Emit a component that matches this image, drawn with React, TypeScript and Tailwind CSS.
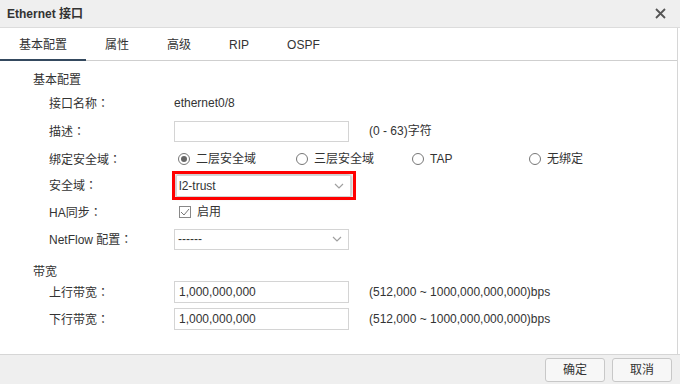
import { useState } from "react";

const font = { fontFamily: '"Liberation Sans", Arial, "Noto Sans CJK SC", sans-serif' };

function Chevron() {
  return (
    <svg width="10" height="6" viewBox="0 0 10 6" className="absolute right-[6px] top-1/2 -translate-y-1/2">
      <path d="M1 1 L5 5 L9 1" fill="none" stroke="#a0a0a0" strokeWidth="1.2" />
    </svg>
  );
}

function Radio({ checked, label }: { checked?: boolean; label: string }) {
  return (
    <label className="flex items-center gap-[6px]">
      <span className="w-[12px] h-[12px] rounded-full border border-[#777] flex items-center justify-center bg-white">
        {checked && <span className="w-[6px] h-[6px] rounded-full bg-[#666]" />}
      </span>
      <span>{label}</span>
    </label>
  );
}

function Row({ label, h, children }: { label: string; h: string; children?: React.ReactNode }) {
  return (
    <div className={`flex items-center ${h}`}>
      <div className="w-[174px] pl-[49px] shrink-0 whitespace-nowrap">
        {label}
        <span style={{ fontFamily: '"Noto Sans CJK TC", sans-serif' }}>：</span>
      </div>
      <div className="flex-1 flex items-center">{children}</div>
    </div>
  );
}

export default function App() {
  const [tab] = useState(0);
  const tabs = ["基本配置", "属性", "高级", "RIP", "OSPF"];

  return (
    <div className="w-[680px] h-[384px] flex flex-col bg-white text-[12px] text-[#333] overflow-hidden" style={font}>
      {/* header */}
      <div className="h-[28px] shrink-0 flex items-center justify-between bg-[#efefef] border-b border-[#dcdcdc] pl-[7px] pr-[14px]">
        <span className="text-[12px] font-bold text-[#333]">Ethernet 接口</span>
        <svg width="11" height="11" viewBox="0 0 11 11">
          <path d="M1 1 L10 10 M10 1 L1 10" stroke="#555" strokeWidth="1.8" />
        </svg>
      </div>

      <div className="flex-1 flex flex-col w-[678px] border-r border-[#d6d6d6]">
        {/* tabs */}
        <div className="h-[33px] shrink-0 flex border-b border-[#cfcfcf]">
          {tabs.map((t, i) => (
            <div
              key={t}
              className={
                "px-[19px] flex items-center pt-[2px] " +
                (i === tab ? "border-b-2 border-[#34495e] mb-[-1px]" : "")
              }
            >
              {t}
            </div>
          ))}
        </div>

        {/* content */}
        <div className="flex-1 pt-[10px]">
          <div className="pl-[33px] h-[18px] flex items-center">基本配置</div>
          <Row label="接口名称" h="h-[28px]">ethernet0/8</Row>
          <Row label="描述" h="h-[28px]">
            <input className="w-[175px] h-[21px] border border-[#d4d4d4] outline-none" />
            <span className="ml-[20px]">(0 - 63)字符</span>
          </Row>
          <Row label="绑定安全域" h="h-[28px]">
            <div className="flex items-center">
              <div className="w-[122px] pl-[4px]"><Radio checked label="二层安全域" /></div>
              <div className="w-[116px]"><Radio label="三层安全域" /></div>
              <div className="w-[117px]"><Radio label="TAP" /></div>
              <div><Radio label="无绑定" /></div>
            </div>
          </Row>
          <Row label="安全域" h="h-[25px]">
            <div className="relative ml-[2px]">
              <div className="relative w-[175px] h-[22px] bg-white border border-[#d4d4d4] shadow-[0_0_4px_rgba(0,0,0,0.45)] flex items-center pl-[2px]">
                l2-trust
                <Chevron />
              </div>
              <div className="absolute left-[-4px] right-[-5px] top-[-4px] bottom-[-3px] border-[3px] border-[#f00]" />
            </div>
          </Row>
          <Row label="HA同步" h="h-[28px]">
            <label className="flex items-center gap-[6px] ml-[5px]">
              <span className="w-[12px] h-[12px] border border-[#888] flex items-center justify-center bg-white">
                <svg width="10" height="8" viewBox="0 0 10 8">
                  <path d="M1 4 L4 7 L9 1" fill="none" stroke="#777" strokeWidth="1" />
                </svg>
              </span>
              启用
            </label>
          </Row>
          <Row label="NetFlow 配置" h="h-[26px]">
            <div className="relative w-[175px] h-[21px] border border-[#d4d4d4] flex items-center pl-[3px]">
              ------
              <Chevron />
            </div>
          </Row>

          <div className="pl-[33px] h-[18px] flex items-center mt-[11px]">带宽</div>
          <div className="flex flex-col gap-[5px]">
            <Row label="上行带宽" h="h-[22px]">
              <div className="w-[175px] h-[22px] border border-[#d4d4d4] flex items-center pl-[4px]">1,000,000,000</div>
              <span className="ml-[20px]">(512,000 ~ 1000,000,000,000)bps</span>
            </Row>
            <Row label="下行带宽" h="h-[22px]">
              <div className="w-[175px] h-[22px] border border-[#d4d4d4] flex items-center pl-[4px]">1,000,000,000</div>
              <span className="ml-[20px]">(512,000 ~ 1000,000,000,000)bps</span>
            </Row>
          </div>
        </div>
      </div>

      {/* footer */}
      <div className="h-[30px] shrink-0 bg-[#efefef] border-t border-[#d6d6d6] flex items-center justify-end gap-[7px] pr-[8px]">
        <button className="w-[60px] h-[24px] border border-[#c8c8c8] rounded-[3px] bg-[#f7f7f7] text-[12px] text-[#333]">确定</button>
        <button className="w-[60px] h-[24px] border border-[#c8c8c8] rounded-[3px] bg-[#f7f7f7] text-[12px] text-[#333]">取消</button>
      </div>
    </div>
  );
}
